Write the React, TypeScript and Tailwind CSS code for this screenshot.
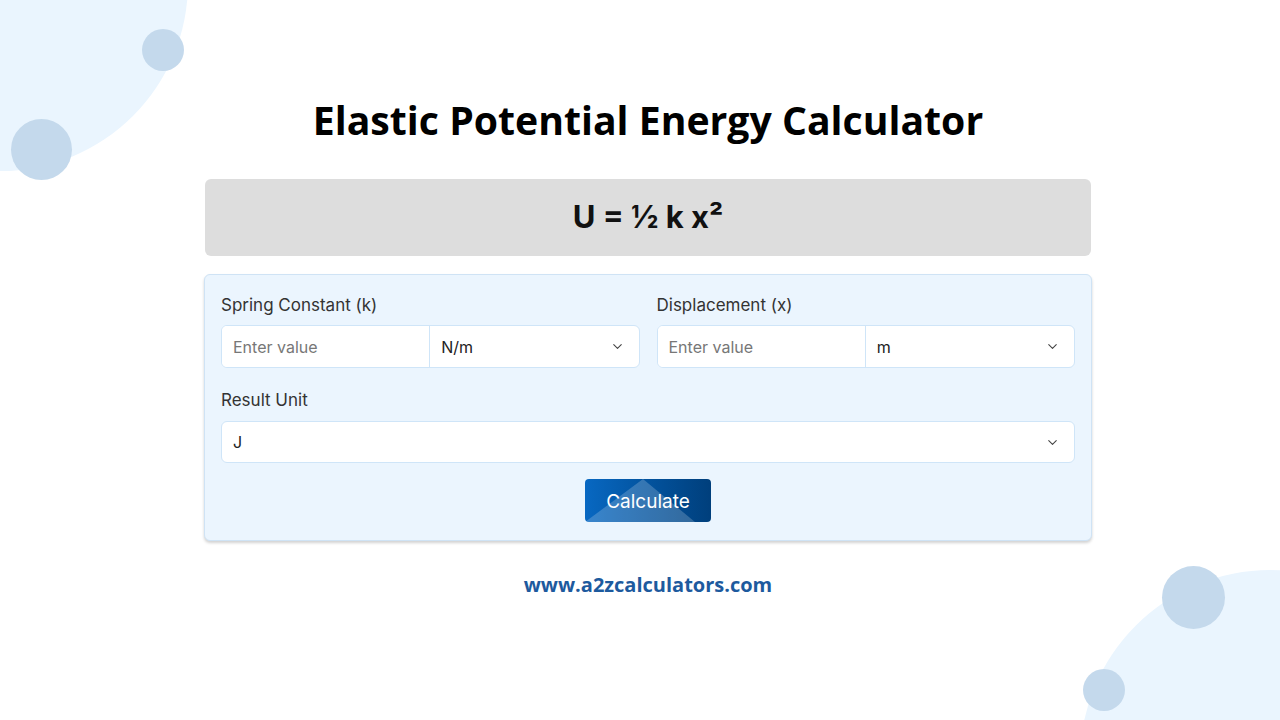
import { ChevronDown } from "lucide-react";

const body = { fontFamily: "Inter, 'Noto Sans', sans-serif" };
const heading = { fontFamily: "'Open Sans', 'Noto Sans', sans-serif" };

function UnitField({ label, unit }: { label: string; unit: string }) {
  return (
    <div className="flex flex-col">
      <label className="text-[17px] leading-6 text-[#333]">{label}</label>
      <div className="mt-[8px] flex h-[43px] rounded-[6px] border border-[#cfe5f8] bg-white overflow-hidden">
        <input
          className="w-1/2 min-w-0 border-r border-[#cfe5f8] bg-white px-[11px] text-[16px] text-[#222] placeholder:text-[#777] outline-none"
          placeholder="Enter value"
          style={body}
        />
        <div className="flex w-1/2 items-center justify-between pl-[11px] pr-[14px] text-[16px] text-[#222]">
          <span>{unit}</span>
          <ChevronDown className="h-[15px] w-[15px] text-[#444]" strokeWidth={1.75} />
        </div>
      </div>
    </div>
  );
}

export default function App() {
  return (
    <div className="relative h-[720px] w-full overflow-hidden bg-white" style={body}>
      {/* background blobs */}
      <div className="absolute left-[-188px] top-[-205px] h-[376px] w-[376px] rounded-full bg-[#eaf5fe]" />
      <div className="absolute left-[142px] top-[29px] h-[42px] w-[42px] rounded-full bg-[#c4d9ec]" />
      <div className="absolute left-[11px] top-[119px] h-[61px] w-[61px] rounded-full bg-[#c4d9ec]" />
      <div className="absolute left-[1080px] top-[570px] h-[380px] w-[380px] rounded-full bg-[#eaf5fe]" />
      <div className="absolute left-[1162px] top-[566px] h-[63px] w-[63px] rounded-full bg-[#c4d9ec]" />
      <div className="absolute left-[1083px] top-[669px] h-[42px] w-[42px] rounded-full bg-[#c4d9ec]" />

      <div className="relative flex flex-col items-center pl-[16px] pt-[96px]">
        <h1 className="text-[39.2px] font-bold leading-[48px] text-black" style={heading}>
          Elastic Potential Energy Calculator
        </h1>

        <div className="mt-[35px] flex h-[77px] w-[886px] items-center justify-center rounded-[6px] bg-[#dddddd]">
          <span className="text-[31px] font-bold text-[#111]">U = ½ k x²</span>
        </div>

        <div className="mt-[18px] w-[888px] rounded-[6px] border border-[#cfe3f5] bg-[#ebf5fe] px-[16px] pb-[18px] pt-[18px] shadow-[0_2px_3px_rgba(0,0,0,0.18)]">
          <div className="grid grid-cols-2 gap-[17px]">
            <UnitField label="Spring Constant (k)" unit="N/m" />
            <UnitField label="Displacement (x)" unit="m" />
          </div>

          <div className="mt-[20px] flex flex-col">
            <label className="text-[17px] leading-6 text-[#333]">Result Unit</label>
            <div className="mt-[9px] flex h-[42px] items-center justify-between rounded-[6px] border border-[#cfe5f8] bg-white pl-[11px] pr-[14px] text-[16px] text-[#222]">
              <span>J</span>
              <ChevronDown className="h-[15px] w-[15px] text-[#444]" strokeWidth={1.75} />
            </div>
          </div>

          <div className="mt-[16px] flex justify-center">
            <button className="relative h-[43px] w-[126px] overflow-hidden rounded-[4px] bg-gradient-to-r from-[#0868c2] to-[#003f7c] pt-[3px] text-[19px] text-white">
              <svg className="absolute inset-0 h-full w-full" viewBox="0 0 126 43" preserveAspectRatio="none">
                <polygon points="0,43 58,0 110,43" fill="rgba(255,255,255,0.2)" />
              </svg>
              <span className="relative">Calculate</span>
            </button>
          </div>
        </div>

        <p className="mt-[29px] text-[20px] font-bold text-[#1d5a9e]" style={heading}>
          www.a2zcalculators.com
        </p>
      </div>
    </div>
  );
}
